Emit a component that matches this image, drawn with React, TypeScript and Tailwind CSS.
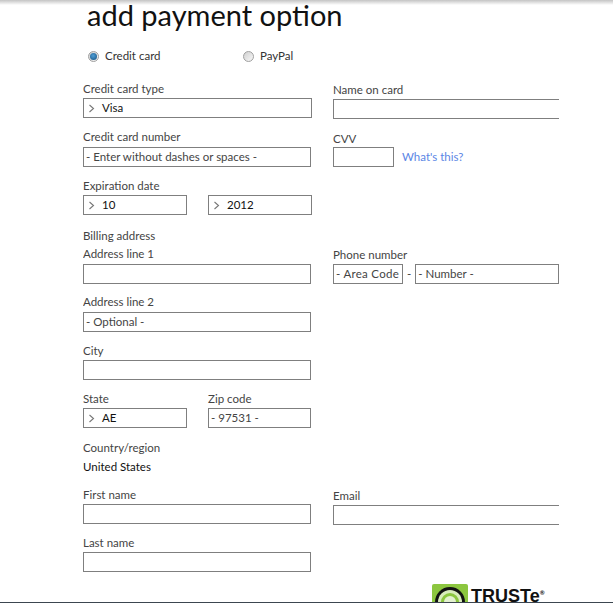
import type { ReactNode } from "react";

const font = { fontFamily: 'Lato, "Open Sans", sans-serif' };

function Label({ children, className = "" }: { children: ReactNode; className?: string }) {
  return <div className={`h-4 text-[11.5px] leading-4 text-[#444444] ${className}`}>{children}</div>;
}

function Box({ children, className = "w-[229px]", dark = false }: { children?: ReactNode; className?: string; dark?: boolean }) {
  return (
    <div
      className={`flex h-5 shrink-0 items-center overflow-hidden whitespace-nowrap border border-[#7f7f7f] px-[2px] text-[11.5px] leading-4 ${
        dark ? "text-[#111111]" : "text-[#444444]"
      } ${className}`}
    >
      {children}
    </div>
  );
}

function Chevron() {
  return (
    <svg width="7" height="9" viewBox="0 0 7 9" className="ml-[2px] mr-[7px] shrink-0">
      <path d="M1.5 1 L5.5 4.5 L1.5 8" fill="none" stroke="#777777" strokeWidth="1.1" />
    </svg>
  );
}

function Select({ value }: { value: string }) {
  return (
    <Box className="w-[104px]" dark>
      <Chevron />
      {value}
    </Box>
  );
}

function Radio({ checked = false }: { checked?: boolean }) {
  return (
    <div className="flex h-[11px] w-[11px] items-center justify-center rounded-full border border-[#a0a0a0] bg-gradient-to-br from-[#d0d0d0] to-[#f8f8f8]">
      {checked && <div className="h-[7px] w-[7px] rounded-full bg-[radial-gradient(circle_at_45%_40%,#4f9ed6,#17507e)]" />}
    </div>
  );
}

function TrusteLogo() {
  return (
    <div className="flex items-start">
      <svg width="36" height="36" viewBox="0 0 36 36" className="shrink-0">
        <rect width="36" height="36" rx="2" fill="#8cc63f" />
        <circle cx="18" cy="18" r="15" fill="#111111" />
        <circle cx="18" cy="18" r="12" fill="#d9ecbb" />
        <circle cx="18" cy="18" r="9" fill="#8cc63f" />
        <circle cx="18" cy="18" r="6" fill="#e4f1d0" />
      </svg>
      <span className="ml-[3px] mt-[1px] text-[18px] font-bold leading-[22px] text-[#111111]" style={{ fontFamily: '"Liberation Sans", sans-serif' }}>
        TRUSTe
      </span>
      <span className="mt-[2px] text-[6px] font-bold leading-[14px] text-[#111111]">®</span>
    </div>
  );
}

export default function App() {
  return (
    <div className="relative h-[603px] w-[613px] overflow-hidden bg-white" style={font}>
      <div className="absolute inset-x-0 top-0 h-[5px] bg-gradient-to-b from-[#c4c4c4] to-white" />
      <div className="absolute inset-x-0 bottom-0 z-10 h-px bg-[#3c4650]" />

      <h1 className="ml-[87px] h-[33px] text-[29px] font-normal leading-[29px] text-[#111111]">add payment option</h1>

      <div className="ml-[88px] mt-[15px] flex h-4 items-center text-[11.5px] text-[#333333]">
        <div className="flex w-[155px] items-center gap-[6px]">
          <Radio checked />
          <span>Credit card</span>
        </div>
        <div className="flex items-center gap-[6px]">
          <Radio />
          <span>PayPal</span>
        </div>
      </div>

      <div className="ml-[83px] mt-[17px] flex w-[476px] justify-between overflow-hidden">
        <div className="flex w-[229px] flex-col">
          <Label>Credit card type</Label>
          <Box className="mt-px w-[229px]" dark>
            <Chevron />
            Visa
          </Box>
          <Label className="mt-[11px]">Credit card number</Label>
          <Box className="mt-[2px] w-[228px]">- Enter without dashes or spaces -</Box>
          <Label className="mt-[11px]">Expiration date</Label>
          <div className="mt-px flex justify-between">
            <Select value="10" />
            <Select value="2012" />
          </div>
          <Label className="mt-[13px]">Billing address</Label>
          <Label className="mt-[2px]">Address line 1</Label>
          <Box className="mt-[2px] w-[228px]" />
          <Label className="mt-[10px]">Address line 2</Label>
          <Box className="mt-[2px] w-[228px]">- Optional -</Box>
          <Label className="mt-[11px]">City</Label>
          <Box className="mt-px w-[228px]" />
          <div className="mt-[11px] flex">
            <Label className="w-[125px]">State</Label>
            <Label>Zip code</Label>
          </div>
          <div className="mt-px flex gap-[21px]">
            <Select value="AE" />
            <Box className="w-[103px]">- 97531 -</Box>
          </div>
          <Label className="mt-[12px]">Country/region</Label>
          <div className="mt-[3px] h-4 text-[11.5px] leading-4 text-[#111111]">United States</div>
          <Label className="mt-[12px]">First name</Label>
          <Box className="mt-px w-[228px]" />
          <Label className="mt-[11px]">Last name</Label>
          <Box className="mt-px w-[228px]" />
        </div>

        <div className="flex w-[226px] flex-col">
          <Label className="mt-px">Name on card</Label>
          <Box className="mt-px w-[240px]" />
          <Label className="mt-[12px]">CVV</Label>
          <div className="flex items-center">
            <Box className="w-[61px]" />
            <span className="ml-[8px] text-[11.5px] text-[#5b86e5]">What's this?</span>
          </div>
          <Label className="mt-[80px]">Phone number</Label>
          <div className="mt-px flex items-center">
            <Box className="w-[70px] tracking-[0.3px]">- Area Code -</Box>
            <span className="mx-[4px] text-[11.5px] text-[#444444]">-</span>
            <Box className="w-[144px]">- Number -</Box>
          </div>
          <Label className="mt-[204px]">Email</Label>
          <Box className="mt-px w-[240px]" />
        </div>
      </div>

      <div className="ml-[432px] mt-[12px]">
        <TrusteLogo />
      </div>
    </div>
  );
}
